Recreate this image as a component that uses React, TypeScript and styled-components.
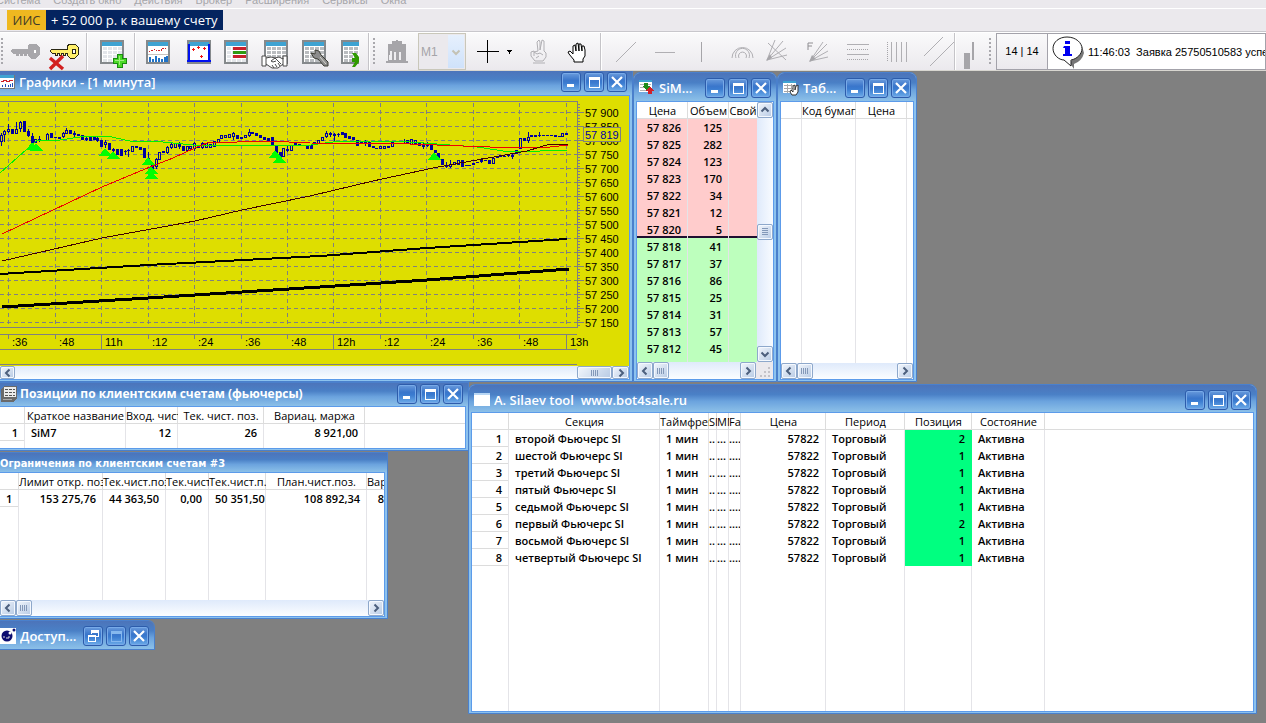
import React from "react";
import styled, { createGlobalStyle, css } from "styled-components";

const uiFont = `"Open Sans", "Noto Sans", sans-serif`;
const plainFont = `"Liberation Sans", Arial, sans-serif`;

const GlobalStyle = createGlobalStyle`
  * { box-sizing: border-box; }
  body { margin: 0; overflow: hidden; font-family: ${uiFont}; font-size: 11px; color: #000; background: #808080; }
  button { font: inherit; padding: 0; border: 0; background: none; }
  svg { display: block; flex: none; overflow: visible; }
`;

const Page = styled.div`
  display: flex;
  flex-direction: column;
  min-height: 100vh;
`;

/* ---------- menu, banner and toolbar ---------- */

const MenuBar = styled.nav`
  display: flex;
  align-items: flex-end;
  gap: 13px;
  height: 9px;
  padding-bottom: 2px;
  overflow: hidden;
  background: #ebe9ed;
  border-bottom: 1px solid #fff;
`;

const MenuItem = styled.button`
  font-size: 11px;
  line-height: 16px;
  height: 14px;
  flex: none;
  white-space: nowrap;
  font-family: ${plainFont};
  color: #a6a6aa;
  &:first-child { margin-left: -4px; }
`;

const BannerBar = styled.div`
  display: flex;
  align-items: flex-start;
  gap: 3px;
  height: 23px;
  padding-top: 1px;
  background: #ebe9ed;
  border-bottom: 1px solid #c8c7cc;
`;

const Banner = styled.a`
  display: flex;
  height: 20px;
  line-height: 20px;
  color: #fff;
  background: #04245f;
  font-size: 13px;
  font-weight: 500;
  text-decoration: none;
  white-space: nowrap;
`;

const BannerTag = styled.span`
  width: 39px;
  text-align: center;
  color: #3f3a28;
  background: #efb820;
`;

const BannerText = styled.span`
  padding: 0 5px;
`;

const Toolbar = styled.div`
  display: flex;
  align-items: stretch;
  height: 39px;
  background: linear-gradient(#fafafb, #ebe9ed);
  border-top: 1px solid #fff;
  border-bottom: 1px solid #d8d6d0;
`;

const Grip = styled.span<{ $w: number }>`
  flex: none;
  width: ${(p) => p.$w}px;
  margin: 4px 0;
  background: radial-gradient(circle, #a9a8ad 1px, transparent 1px) center top / 4px 4px repeat-y;
`;

const Separator = styled.span`
  flex: none;
  width: 2px;
  border-left: 1px solid #c5c4c8;
  border-right: 1px solid #fff;
`;

const Tool = styled.button<{ $w: number }>`
  display: flex;
  flex: none;
  align-items: center;
  justify-content: center;
  width: ${(p) => p.$w}px;
`;

const Period = styled.label`
  position: relative;
  flex: none;
  width: 48px;
  margin-left: 2px;
  border: 1px solid #c9c7ba;
  background: #ebe9ed;
`;

const PeriodSelect = styled.select`
  appearance: none;
  width: 100%;
  height: 100%;
  padding: 0 0 0 2px;
  border: 0;
  background: transparent;
  color: #a5a4a8;
  opacity: 1;
  font: 12px ${plainFont};
`;

const PeriodArrow = styled.span`
  position: absolute;
  top: 1px;
  right: 1px;
  bottom: 1px;
  width: 16px;
  display: flex;
  align-items: center;
  justify-content: center;
  background: linear-gradient(#e6f0fd, #cfe2fb);
  pointer-events: none;
`;

const Counter = styled.div`
  flex: none;
  width: 52px;
  margin-left: 2px;
  border: 1px solid #a3a2aa;
  text-align: center;
  line-height: 34px;
  font-family: ${plainFont};
`;

const Message = styled.output`
  display: flex;
  flex: 1;
  min-width: 0;
  align-items: center;
  gap: 4px;
  padding-left: 4px;
  overflow: hidden;
  border: 1px solid #a3a2aa;
  border-left-width: 0;
  background: #fff;
  white-space: pre;
  font-family: ${plainFont};
`;

/* ---------- desktop windows ---------- */

const Desktop = styled.main`
  position: relative;
  flex: 1;
  overflow: hidden;
  background: #808080;
`;

const Frame = styled.section<{ $x: number; $y: number; $w: number; $h: number; $cut?: boolean; $square?: boolean }>`
  position: absolute;
  left: ${(p) => p.$x}px;
  top: ${(p) => p.$y}px;
  width: ${(p) => p.$w}px;
  height: ${(p) => p.$h}px;
  display: flex;
  flex-direction: column;
  overflow: hidden;
  padding: 0 2px 1px;
  border: 1px solid #4a80cc;
  border-radius: 7px 7px 0 0;
  background: #8cc2ee;
  ${(p) => p.$square && css`border-radius: 0;`}
  ${(p) => p.$cut && css`border-left: 0; padding-left: 0; border-top-left-radius: 0;`}
`;

const TitleBar = styled.header<{ $h: number; $cut?: boolean; $square?: boolean }>`
  display: flex;
  flex: none;
  align-items: center;
  gap: 4px;
  height: ${(p) => p.$h}px;
  margin: 0 -2px 0 ${(p) => (p.$cut ? 0 : -2)}px;
  padding: ${(p) => (p.$square ? "0 5px 2px" : "2px 5px 0")};
  ${(p) => p.$cut && css`padding-left: 0;`}
  background: linear-gradient(#4c74ba 0%, #4a80c6 35%, #6ba3de 60%, #8cc0e8 100%);
`;

const Title = styled.h2<{ $tight?: boolean; $small?: boolean }>`
  flex: 1;
  min-width: 0;
  margin: 0;
  overflow: hidden;
  color: #fff;
  white-space: pre;
  font-family: ${uiFont};
  font-size: ${(p) => (p.$tight ? 12 : 13)}px;
  font-weight: ${(p) => (p.$tight ? 700 : 600)};
  line-height: 18px;
  ${(p) => p.$small && css`
    padding-top: 4px;
    font-family: "DejaVu Sans Condensed", "DejaVu Sans", sans-serif;
    font-size: 11px;
    font-weight: 700;
  `}
`;

const Controls = styled.div`
  display: flex;
  gap: 3px;
`;

const ControlButton = styled.button`
  display: flex;
  align-items: center;
  justify-content: center;
  width: 20px;
  height: 20px;
  border: 1px solid #2d5cab;
  border-radius: 3px;
  box-shadow: inset 0 0 0 1px #78aae8;
  background: linear-gradient(#6a9bdc 0%, #3a76cb 40%, #3a7bd0 55%, #6cabe8 100%);
`;

const Body = styled.div<{ $cut?: boolean }>`
  display: flex;
  flex: 1;
  flex-direction: column;
  min-height: 0;
  border: 1px solid #5c9bea;
  ${(p) => p.$cut && css`border-left: 0;`}
  background: #fff;
  overflow: hidden;
`;

const Split = styled.div`
  display: flex;
  flex: 1;
  min-height: 0;
`;

const TableArea = styled.div`
  flex: 1;
  min-width: 0;
  min-height: 0;
  overflow: hidden;
`;

/* ---------- scroll bars ---------- */

const ScrollTrack = styled.div<{ $vertical?: boolean; $size: number }>`
  display: flex;
  flex: none;
  align-items: stretch;
  ${(p) =>
    p.$vertical
      ? css`flex-direction: column; width: ${p.$size}px; background: linear-gradient(90deg, #dfeafb, #f8fbff);`
      : css`height: ${p.$size}px; background: linear-gradient(#dfeafb, #fbfdff);`}
`;

const ScrollButton = styled.button<{ $w?: number }>`
  display: flex;
  flex: none;
  align-items: center;
  justify-content: center;
  width: ${(p) => p.$w ?? 16}px;
  min-height: 12px;
  border: 1px solid #8ea8cb;
  border-radius: 2px;
  box-shadow: inset 0 0 0 1px #f4f8fe;
  background: linear-gradient(135deg, #f2f6fc, #b7cae4);
`;

const VerticalButton = styled(ScrollButton)`
  height: 16px;
`;

const Space = styled.span`
  flex: 1;
`;

const Corner = styled.span`
  width: 17px;
  padding: 4px 3px;
  background: #ebe9ed;
`;

/* ---------- tables ---------- */

const Grid = styled.table<{ $full?: boolean }>`
  width: 100%;
  height: ${(p) => (p.$full ? "100%" : "auto")};
  table-layout: fixed;
  border-collapse: separate;
  border-spacing: 0;
  font-weight: 600;
  line-height: 16px;
`;

const Head = styled.th`
  height: 17px;
  padding: 1px 0 0;
  overflow: hidden;
  white-space: nowrap;
  font-weight: 400;
  box-shadow: inset -1px -1px #dcdcdc;
  &:last-child { box-shadow: inset 0 -1px #dcdcdc; }
`;

const Cell = styled.td<{ $align?: "left" | "right"; $bg?: string; $line?: boolean; $pad?: number }>`
  height: 17px;
  padding: 0 ${(p) => p.$pad ?? 6}px;
  overflow: hidden;
  white-space: nowrap;
  text-align: ${(p) => p.$align ?? "left"};
  background: ${(p) => p.$bg ?? "transparent"};
  border-right: 1px solid ${(p) => p.$bg ?? "#e4e4e8"};
  ${(p) => p.$line && css`box-shadow: inset 0 -1px #dcdcdc;`}
  &:last-child { border-right: 0; }
`;

const FillCell = styled.td`
  padding: 0;
  border-right: 1px solid #e4e4e8;
  &:last-child { border-right: 0; }
`;

const BookRow = styled.tr<{ $side: "ask" | "bid"; $edge?: boolean }>`
  background: ${(p) => (p.$side === "ask" ? "#ffcccc" : "#bdffbd")};
  ${(p) => p.$edge && css`td { box-shadow: inset 0 -2px #201030; }`}
`;

/* ---------- icons ---------- */

const crisp = { shapeRendering: "crispEdges" as const };

const GridBase = ({ cell = "#e3e6ea", w = 24 }: { cell?: string; w?: number }) => (
  <g>
    <path d={`M${w} 1H1V23H${w}`} fill="#fff" stroke="#85898c" strokeWidth="2" />
    {w === 24 && <path d="M23 0V24" stroke="#85898c" strokeWidth="2" />}
    <rect x="2" y="2" width={w === 24 ? 20 : w - 2} height="4" fill="#3ea3d2" />
    {[7, 11, 15, 19].map((y) =>
      [3, 8, 13, 18].filter((x) => x < w - 1).map((x) => <rect key={`${x}-${y}`} x={x} y={y} width={x + 4 > w ? w - x : 4} height="3" fill={cell} />)
    )}
  </g>
);

const KeyShape = ({ fill, line }: { fill: string; line: string }) => (
  <g>
    <path d="M1 8L3 6H18V3L21 1H26L29 4V12L26 15H21L18 12V10H16V12H14V10H12V12H10V10H8V12H6V10H3Z" fill={fill} stroke={line} />
    <rect x="23" y="6" width="3" height="4" fill="#fff" stroke={line} />
  </g>
);

const icons = {
  keyOff: <svg width="30" height="18" {...crisp}><KeyShape fill="#a8a7ab" line="#a8a7ab" /></svg>,
  keyCut: (
    <svg width="34" height="18" viewBox="0 0 34 18">
      <g {...crisp}><KeyShape fill="#fff06a" line="#2b2814" /></g>
      <path d="M1 15L14 26M14 13L1 26" stroke="#d22020" strokeWidth="3.4" />
    </svg>
  ),
  add: (
    <svg width="22" height="24" {...crisp}>
      <GridBase />
      <path d="M17 14H22V18H26V23H22V27H17V23H13V18H17Z" fill="#4ad826" stroke="#188a10" />
      <path d="M19 16V25M15 20H24" stroke="#9cf07c" />
    </svg>
  ),
  chart: (
    <svg width="24" height="24" {...crisp}>
      <GridBase cell="#fff" />
      <path d="M3 12L5 10 7 11 9 9 11 11 13 10 15 11 17 8 19 9 21 7" fill="none" stroke="#d02028" strokeDasharray="2 1" />
      <path d="M2 14H22" stroke="#c8c4c0" />
      {[[3, 17], [6, 19], [9, 16], [12, 18], [15, 19], [18, 17], [20, 16]].map(([x, y]) => <rect key={x} x={x} y={y} width="2" height={22 - y} fill="#1f72c8" />)}
    </svg>
  ),
  scatter: (
    <svg width="24" height="24" {...crisp}>
      <GridBase cell="#fff" />
      <path d="M2 4V22M22 4V22M0 21H24" stroke="#0010f0" strokeWidth="2" />
      <path d="M5 9H8M6.500 8V11M10 7H13M11.500 6V9M16 8H19M17.500 7V10M13 16H16M14.500 15V18" stroke="#f01010" />
    </svg>
  ),
  rows: (
    <svg width="26" height="24" {...crisp}>
      <GridBase />
      <rect x="9" y="7" width="13" height="3" fill="#c8202c" />
      <rect x="9" y="11" width="13" height="3" fill="#2f9a12" />
      <rect x="9" y="15" width="13" height="3" fill="#c8202c" />
    </svg>
  ),
  deal: (
    <svg width="22" height="24">
      <g {...crisp}><GridBase cell="#b9bcbf" /></g>
      <path d="M-2 16H2V18L7 17 11 18 15 17 19 19V16H23V26H19V24L14 28 8 28 2 24V26H-2Z" fill="#fff" stroke="#4a4a4a" />
      <path d="M2 18V24M19 18V24M7 21L11 18 17 24M7 21L9 22 12 21M8 25L10 28M11 24L13 27M14 23L16 26" fill="none" stroke="#4a4a4a" />
    </svg>
  ),
  tune: (
    <svg width="24" height="24">
      <g {...crisp}><GridBase cell="#b9bcbf" /></g>
      <path d="M9 13L13 14 13 10 17 11 19 15 26 22V26L22 26 16 19 12 18Z" fill="#8c8c8c" stroke="#3c3c34" />
      <path d="M18 17L24 24" stroke="#d8d8d0" />
    </svg>
  ),
  exportTo: (
    <svg width="20" height="24">
      <g {...crisp}><GridBase cell="#b9bcbf" w={18} /></g>
      <path d="M11 13H15L18 17V22L14 27H11L14 22H11V18H14Z" fill="#2f9a00" />
    </svg>
  ),
  tower: <svg width="22" height="24" {...crisp}><path d="M2 4H6V1H10V0H12V1H16V4H20V21H22V23H0V21H2Z" fill="#a6a5a9" /><path d="M4 11H6V20H3ZM8 12H10V20H8ZM13 12H15V20H13Z" fill="#efeef1" /></svg>,
  cross: <svg width="36" height="23" {...crisp}><path d="M0 11.500H22M10.500 0V23" stroke="#000" /><path d="M30 10H35L32.500 14Z" fill="#000" /></svg>,
  twoFingers: (
    <svg width="18" height="26">
      <path d="M4 13L8 12 7 3 9 1 10 3V11L12 1 14 2 14 12 16 14V18L13 22H5L1 17V13L4 12V17M4 13L7 15 10 14 13 16M9 17L6 19M3 24H15" fill="none" stroke="#b0afb3" />
    </svg>
  ),
  palm: (
    <svg width="20" height="20">
      <path d="M7 18L2 12 1 10 3 9 6 12V4L8 3 9 9V2L11 1 12 9V2L14 2 15 9V4L17 4 18 8V14L16 17V20H7Z" fill="#fff" stroke="#000" />
    </svg>
  ),
  lineUp: <svg width="20" height="20"><path d="M0 20L20 0" stroke="#b0afb3" /></svg>,
  lineFlat: <svg width="20" height="20" {...crisp}><path d="M0 10H20" stroke="#b0afb3" /></svg>,
  lineTall: <svg width="2" height="20" {...crisp}><path d="M.5 0V20" stroke="#a6a5a9" /></svg>,
  arcs: <svg width="24" height="10"><path d="M1 11A10 10 0 1 1 22 11M5 11A7 7 0 1 1 18 11M8 11A4 4 0 1 1 15 11" fill="none" stroke="#b0afb3" /></svg>,
  gann: <svg width="22" height="24"><path d="M1 20L17 1M1 20L20 8M1 20L21 15M2 3L20 20M1 20L9 0" fill="none" stroke="#b0afb3" /><path d="M0 21L4 14 6 18Z" fill="#a6a5a9" /></svg>,
  fibo: <svg width="22" height="22"><path d="M2 20L15 1M2 20L19 3M2 20L20 10M2 20L20 16" fill="none" stroke="#b0afb3" /><path d="M0 9V2H5M0 5H4" fill="none" stroke="#8f8e92" /><path d="M1 21L4 14 8 18Z" fill="#a6a5a9" /></svg>,
  levels: <svg width="22" height="20" {...crisp}><path d="M0 2.500H22M0 12.500H22" stroke="#b0afb3" /><path d="M0 7.500H22M0 17.500H22" stroke="#a6a5a9" strokeDasharray="1 1" /></svg>,
  zones: <svg width="20" height="20" {...crisp}><path d="M.5 0V20" stroke="#a6a5a9" strokeDasharray="1 1" /><path d="M4.500 0V20M9.500 0V20M14.500 0V20M19.500 0V20" stroke="#b0afb3" /></svg>,
  channel: <svg width="30" height="30"><path d="M0 19L19 0M6 29L30 5" stroke="#b0afb3" /></svg>,
  bars: <svg width="14" height="20" {...crisp}><rect y="11" width="6" height="16" fill="#a6a5a9" /><rect x="8" width="2" height="18" fill="#a6a5a9" /></svg>,
  info: (
    <svg width="32" height="32" viewBox="0 0 32 32">
      <path d="M18 27L22 33V28Q30 25 32 17L30 10Z" fill="#777" />
      <path d="M15 1C7 1 1 6 1 12.500S7 24 12 24L19 30V24C25 23 30 18 30 12.500S24 1 15 1Z" fill="#fff" stroke="#222" />
      <path d="M13 5H18V8H13ZM12 10H18V18H20V20H11V18H13V12H11Z" fill="#0000f0" />
    </svg>
  ),
};

const Minimize = () => <svg width="14" height="14" {...crisp}><rect x="3" y="9" width="7" height="3" fill="#fff" /></svg>;
const Maximize = ({ color = "#fff" }: { color?: string }) => (
  <svg width="14" height="14" {...crisp}><path d="M2 2H13V13H2V2M3 5V12H12V5Z" fill={color} fillRule="evenodd" /></svg>
);
const Restore = () => (
  <svg width="14" height="14" {...crisp}><path d="M5 1H13V8H10V7H12V4H6V5H5ZM2 6H10V13H2ZM3 8V12H9V8Z" fill="#fff" fillRule="evenodd" /></svg>
);
const Close = () => <svg width="14" height="14"><path d="M2 2L12 12M12 2L2 12" stroke="#fff" strokeWidth="2.200" /></svg>;

const Chevron = ({ turn = 0, color = "#4c5f7d" }: { turn?: number; color?: string }) => (
  <svg width="10" height="10" viewBox="0 0 10 10"><path d="M6.500 1.500L3 5L6.500 8.500" fill="none" stroke={color} strokeWidth="2" transform={`rotate(${turn} 5 5)`} /></svg>
);
const Lines = ({ turn = 0 }: { turn?: number }) => (
  <svg width="8" height="8" viewBox="0 0 8 8" {...crisp}><path d="M.5 1V7M2.500 1V7M4.500 1V7M6.500 1V7" stroke="#8398b8" transform={`rotate(${turn} 4 4)`} /></svg>
);

const ChartMark = () => (
  <svg width="15" height="14" {...crisp}>
    <rect width="15" height="14" fill="#fff" /><rect width="15" height="3" fill="#3ea3d2" />
    <path d="M1 6.500H3V5.500H6V6.500H9V5.500H13" stroke="#d02028" fill="none" />
    <path d="M2.500 12V10M5.500 12V9M8.500 12V10M10.500 12V9M12.500 12V8" stroke="#1f50b8" />
    <path d="M0 13.500H15M14.500 0V14" stroke="#777" />
  </svg>
);
const BookMark = () => (
  <svg width="16" height="16" {...crisp}>
    <rect width="13" height="12" fill="#fff" /><rect width="13" height="2" fill="#3ea3d2" />
    <path d="M1 4.500H12M1 7.500H12M1 10.500H12" stroke="#b4b4b4" /><path d="M5 3H9V6H11L7 10L3 6H5Z" fill="#1d8c1a" /><path d="M9 14H13V11H15L11 6L7 11H9Z" fill="#d02028" />
  </svg>
);
const TableMark = () => (
  <svg width="16" height="15">
    <rect width="13" height="12" fill="#fff" /><rect width="13" height="2" fill="#3ea3d2" /><path d="M1 4.500H12M1 7.500H12M1 10.500H9M4.500 3V12M8.500 3V12" stroke="#a8a8a8" />
    <path d="M8 9L10 11V5L12 4V9L13 5 15 4V11L13 14H9L7 11Z" fill="#fff" stroke="#333" />
  </svg>
);
const SheetMark = () => (
  <svg width="16" height="16" {...crisp}>
    <path d="M4 0H17V12L13 16H1V3Z" fill="#6a6a6a" /><path d="M4 1H16V11H4Z" fill="#ececec" />
    <path d="M5 3.500H15M5 6.500H15M5 9.500H15" stroke="#555" strokeDasharray="3 1" /><path d="M3 13.500H12" stroke="#aaa" />
  </svg>
);
const FormMark = () => <svg width="16" height="13" {...crisp}><rect width="16" height="13" fill="#fff" /><rect width="16" height="2" fill="#b7d6f4" /></svg>;
const MoonMark = () => <svg width="16" height="16"><rect width="16" height="16" fill="#fff" /><circle cx="7" cy="8" r="5.500" fill="#0c0c70" /><path d="M4 10V8M6 10H9V8" stroke="#ddd" fill="none" /><circle cx="10" cy="5" r="1.500" fill="#fff" /><circle cx="14" cy="2" r="1.500" fill="#0c0c70" /></svg>;

/* ---------- shared parts ---------- */

type WindowProps = {
  x: number; y: number; w: number; h: number; bar: number; title: string; icon?: React.ReactNode;
  cut?: boolean; square?: boolean; small?: boolean; tight?: boolean; controls?: boolean; minimized?: boolean; children?: React.ReactNode;
};

const Window = ({ x, y, w, h, bar, title, icon, cut, square, small, tight, controls = true, minimized, children }: WindowProps) => (
  <Frame $x={x} $y={y} $w={w} $h={h} $cut={cut} $square={square} aria-label={title}>
    <TitleBar $h={bar} $cut={cut} $square={square}>
      {icon}
      <Title $small={small} $tight={tight}>{title}</Title>
      {controls && (
        <Controls>
          <ControlButton aria-label={minimized ? "Восстановить" : "Свернуть"}>{minimized ? <Restore /> : <Minimize />}</ControlButton>
          <ControlButton aria-label="Развернуть"><Maximize color={minimized ? "#86b8ee" : "#fff"} /></ControlButton>
          <ControlButton aria-label="Закрыть"><Close /></ControlButton>
        </Controls>
      )}
    </TitleBar>
    {!minimized && <Body $cut={cut}>{children}</Body>}
  </Frame>
);

const Columns = ({ widths }: { widths: number[] }) => (
  <colgroup>{widths.map((w, i) => <col key={i} style={{ width: w }} />)}<col /></colgroup>
);

const Filler = ({ n }: { n: number }) => <tr>{Array.from({ length: n }, (_, i) => <FillCell key={i} />)}</tr>;

const HorizontalScroll = () => (
  <ScrollTrack $size={16}>
    <ScrollButton aria-label="Влево"><Chevron /></ScrollButton>
    <ScrollButton aria-label="Ползунок"><Lines /></ScrollButton>
    <Space />
    <ScrollButton aria-label="Вправо"><Chevron turn={180} /></ScrollButton>
  </ScrollTrack>
);

/* ---------- price chart ---------- */

/* Candles: wick top, wick bottom, body top, body bottom in thirds of a pixel; fifth value 1 is a rising (hollow) candle. */
const candles: number[][] = [
  [130,167,135,157,1],[120,155,123,135,1],[103,130,117,125,1],[117,132,117,132],[95,132,117,131,1],[93,125,97,117,1],[93,127,93,127],
  [117,142,123,138],[130,165,138,162],[148,160,148,160,1],[137,155,148,152],[149,152,149,152],[130,153,131,152,1],[129,143,129,143],
  [141,144,141,144],[140,147,140,147,1],[125,143,130,142,1],[113,133,120,132,1],[120,132,120,132],[123,140,129,135],[133,138,133,138],
  [135,150,135,150],[140,152,143,150],[141,152,141,152],[142,150,142,150],[138,155,144,154],[150,170,150,170],[150,175,157,165,1],
  [158,180,158,180],[173,190,176,183],[178,195,178,195],[178,198,178,198],[180,195,182,185],[178,200,180,184],[168,186,168,186,1],
  [167,175,167,175],[172,180,172,180],[175,203,175,203],[185,220,203,215],[218,236,218,236],[203,238,207,232,1],[187,209,187,209,1],
  [183,190,183,190],[168,193,172,190,1],[160,178,163,175,1],[160,175,160,175,1],[155,178,162,172],[168,183,168,183],[167,182,167,182,1],
  [167,178,167,178,1],[155,183,160,176,1],[165,175,165,175,1],[155,178,158,174,1],[160,174,160,174,1],[162,174,162,174,1],
  [154,170,154,170,1],[147,158,147,158,1],[135,148,135,148,1],[135,145,135,145,1],[131,145,131,145,1],[125,150,128,140,1],
  [135,147,135,147],[140,147,140,147,1],[134,145,134,145,1],[117,140,125,138,1],[125,133,125,133],[128,137,128,137],[135,145,135,145],
  [140,150,140,150],[143,152,143,152],[141,165,141,165],[168,190,168,190],[185,200,185,200],[175,200,175,200,1],[165,185,177,183],
  [165,182,165,182,1],[160,165,160,165],[162,168,162,168],[164,168,164,168],[166,178,166,178],[165,178,165,178],[155,165,155,165,1],
  [150,162,150,162,1],[140,153,140,153,1],[122,143,128,140,1],[125,140,130,134],[130,155,133,137],[128,140,132,136],[127,135,127,135],
  [129,145,129,145],[137,147,137,147],[140,150,140,150],[150,167,150,167],[157,163,157,163],[150,167,155,163,1],[157,170,157,170],
  [168,175,168,175],[174,178,174,178],[168,176,168,176,1],[168,176,168,176,1],[168,175,168,175,1],[155,170,155,170,1],
  [153,157,153,157],[154,157,154,157],[148,160,153,157],[150,162,150,162],[148,166,148,166,1],[150,163,150,163,1],[158,167,158,167],
  [158,178,165,172,1],[155,170,165,168],[165,180,165,180],[180,190,180,190],[190,207,190,207],[207,224,207,224],[215,235,225,232,1],
  [210,235,223,231,1],[215,225,215,225,1],[210,225,210,225,1],[210,230,210,230],[226,229,226,229],[226,229,226,229],[218,225,218,225,1],
  [217,220,217,220],[203,220,210,215],[211,214,211,214],[210,222,210,222],[205,222,205,222,1],[202,205,202,205],[198,201,198,201],
  [198,201,198,201],[192,202,195,198],[190,207,195,200],[180,192,180,192],[145,178,145,178,1],[145,152,145,152],[127,160,140,152,1],
  [135,141,135,141],[135,140,135,140],[127,140,135,139],[135,139,135,139],[135,139,135,139],[134,137,134,137],[136,140,136,140],
  [138,142,138,142],[130,142,130,142,1],[130,134,130,134],
];
const chartY = (v: number) => Math.round(v / 3) - 6;

const timeMarks: [number, string][] = [
  [8, ":36"], [55, ":48"], [101, "11h"], [148, ":12"], [194, ":24"], [241, ":36"], [287, ":48"],
  [333, "12h"], [380, ":12"], [426, ":24"], [473, ":36"], [519, ":48"], [566, "13h"],
];
const priceMarks = Array.from({ length: 16 }, (_, i) => ({ y: 16 + i * 14, label: `57 ${900 - i * 50}` }));
const signals = [[32, 47], [36, 48], [105, 53], [113, 56], [148, 62], [151, 71], [151, 76], [275, 55], [279, 60], [434, 57]];

const PriceChart = () => (
  <svg width="629" height="270" viewBox="0 0 629 270" fontFamily="Liberation Sans, Arial, sans-serif" fontSize="11" role="img" aria-label="Минутный график">
    <rect width="629" height="270" fill="#dede00" />
    <g {...crisp} fill="none" stroke="#808080">
      <path d={priceMarks.map((p) => `M0 ${p.y}.5H577`).join("")} strokeDasharray="4 3" />
      <path d={timeMarks.map(([x]) => `M${x}.5 7V231`).join("")} strokeDasharray="4 3" />
      <path d="M0 5.500H577.500V231.500H0M0 238.500H577M0 253.500H577M0 268.500H577" />
      <path d={Array.from({ length: 80 }, (_, i) => `M577 ${Math.round(8 + i * 2.8)}.5h3`).join("")} />
      <path d={priceMarks.map((p) => `M577 ${p.y}.5h7`).join("")} />
      <path d={timeMarks.map(([x, t]) => `M${x}.5 238v${t.endsWith("h") ? 15 : 5}`).join("")} />
    </g>
    <g {...crisp} stroke="#0000a0">
      {candles.map(([t, b, o, c, up], i) => {
        const x = Math.round(0.5 + i * 3.875);
        const top = chartY(o);
        const height = Math.max(1, chartY(c) - top);
        return (
          <g key={i}>
            <path d={`M${x}.5 ${chartY(t)}V${chartY(b)}`} />
            {up && height > 1 ? <rect x={x - 0.5} y={top + 0.5} width="2" height={height - 1} fill="#dede00" /> : <rect x={x - 1} y={top} width="3" height={height} fill="#0000a0" stroke="none" />}
          </g>
        );
      })}
    </g>
    <g {...crisp} fill="none">
      <path d="M0 77L36 45 60 44 80 41 107 40 130 45 163 46 193 49 311 49 340 45 370 45 410 46 437 48 477 51 510 56 540 55 567 54" stroke="#00f000" />
      <path d="M2 138L102 91 150 71 173 62 195 52 207 47 267 45 310 47 410 48 463 50 490 51 550 51 568 49" stroke="#f00000" />
      <path d="M2 165L102 142 195 125 242 114 310 100 373 85 433 72 477 64 527 55 550 48 568 48" stroke="#400000" />
      <path d="M0 178L148 169 320 160 427 152 567 143" stroke="#000" strokeWidth="2" />
      <path d="M2 211L148 202 320 191 427 184 569 173" stroke="#000" strokeWidth="3" />
    </g>
    <g {...crisp} fill="#00ff00">
      {signals.map(([x, y], i) => <path key={i} d={`M${x} ${y - 1}l7 8h-13z`} />)}
    </g>
    {priceMarks.map((p) => <text key={p.y} x="585" y={p.y + 5}>{p.label}</text>)}
    {timeMarks.map(([x, t]) => <text key={x} x={x + 4} y="250">{t}</text>)}
    <rect x="583.500" y="31.500" width="37" height="14" fill="#dede00" stroke="#808080" />
    <text x="585" y="43" fill="#0000a0">57 819</text>
  </svg>
);

/* ---------- data ---------- */

const asks = [[826, 125], [825, 282], [824, 123], [823, 170], [822, 34], [821, 12], [820, 5]];
const bids = [[818, 41], [817, 37], [816, 86], [815, 25], [814, 31], [813, 57], [812, 45], [811, 38]];
const sections: [string, number][] = [
  ["второй", 2], ["шестой", 1], ["третий", 1], ["пятый", 1], ["седьмой", 1], ["первый", 2], ["восьмой", 1], ["четвертый", 1],
];
const menu = ["Система", "Создать окно", "Действия", "Брокер", "Расширения", "Сервисы", "Окна"];

type ToolDef = [keyof typeof icons, number, string];
const Tools = ({ items }: { items: ToolDef[] }) => (
  <>{items.map(([name, w, label]) => <Tool key={name} $w={w} aria-label={label}>{icons[name]}</Tool>)}</>
);

export default function App() {
  return (
    <Page>
      <GlobalStyle />
      <MenuBar>{menu.map((m) => <MenuItem key={m}>{m}</MenuItem>)}</MenuBar>
      <BannerBar>
        <Grip $w={4} />
        <Banner href="#iis"><BannerTag>ИИС</BannerTag><BannerText>+ 52 000 р. к вашему счету</BannerText></Banner>
      </BannerBar>
      <Toolbar>
        <Grip $w={4} />
        <Tools items={[["keyOff", 42, "Подключить"], ["keyCut", 40, "Отключить"]]} />
        <Separator />
        <Tools items={[["add", 46, "Новая таблица"]]} />
        <Separator />
        <Tools items={[["chart", 44, "График"], ["scatter", 38, "Точки"], ["rows", 38, "Котировки"], ["deal", 38, "Сделки"], ["tune", 40, "Настройка"], ["exportTo", 34, "Экспорт"]]} />
        <Separator />
        <Grip $w={8} />
        <Tools items={[["tower", 38, "Индикаторы"]]} />
        <Period>
          <PeriodSelect disabled aria-label="Период"><option>M1</option></PeriodSelect>
          <PeriodArrow><Chevron turn={-90} color="#c4c2b4" /></PeriodArrow>
        </Period>
        <Tools items={[["cross", 58, "Перекрестие"], ["twoFingers", 30, "Выбор"], ["palm", 46, "Сдвиг"]]} />
        <Separator />
        <Tools items={[["lineUp", 48, "Линия"], ["lineFlat", 30, "Горизонталь"], ["lineTall", 44, "Вертикаль"], ["arcs", 38, "Дуги"], ["gann", 30, "Веер Ганна"], ["fibo", 54, "Веер Фибоначчи"], ["levels", 24, "Уровни"], ["zones", 54, "Зоны"], ["channel", 30, "Канал"]]} />
        <Separator />
        <Tools items={[["bars", 30, "Объемы"]]} />
        <Grip $w={8} />
        <Counter>14 | 14</Counter>
        <Message>{icons.info}<span>11:46:03  Заявка 25750510583 успешно</span></Message>
      </Toolbar>

      <Desktop>
        <Window x={0} y={-1} w={633} h={312} bar={24} title="Графики - [1 минута]" icon={<ChartMark />} cut square>
          <PriceChart />
          <ScrollTrack $size={13}>
            <ScrollButton $w={15} aria-label="Влево"><Chevron /></ScrollButton>
            <Space />
            <ScrollButton $w={35} aria-label="Ползунок"><Lines /></ScrollButton>
            <ScrollButton $w={17} aria-label="Вправо"><Chevron turn={180} /></ScrollButton>
          </ScrollTrack>
        </Window>

        <Window x={633} y={1} w={144} h={310} bar={28} title="SiM…" icon={<BookMark />}>
          <Split>
            <TableArea>
              <Grid>
                <Columns widths={[51, 41]} />
                <thead><tr><Head>Цена</Head><Head>Объем</Head><Head>Свой</Head></tr></thead>
                <tbody>
                  {asks.map(([p, v], i) => <BookRow key={p} $side="ask" $edge={i === asks.length - 1}><Cell $align="right">57 {p}</Cell><Cell $align="right">{v}</Cell><Cell /></BookRow>)}
                  {bids.map(([p, v]) => <BookRow key={p} $side="bid"><Cell $align="right">57 {p}</Cell><Cell $align="right">{v}</Cell><Cell /></BookRow>)}
                </tbody>
              </Grid>
            </TableArea>
            <ScrollTrack $vertical $size={16}>
              <VerticalButton aria-label="Вверх"><Chevron turn={90} /></VerticalButton>
              <Space />
              <VerticalButton aria-label="Ползунок"><Lines turn={90} /></VerticalButton>
              <Space />
              <VerticalButton aria-label="Вниз"><Chevron turn={-90} /></VerticalButton>
            </ScrollTrack>
          </Split>
          <ScrollTrack $size={17}>
            <ScrollButton aria-label="Влево"><Chevron /></ScrollButton>
            <ScrollButton aria-label="Ползунок"><Lines /></ScrollButton>
            <Space />
            <ScrollButton aria-label="Вправо"><Chevron turn={180} /></ScrollButton>
            <Corner><svg width="12" height="12" {...crisp}><path d="M9 1h2v2h-2zM5 5h2v2h-2zM9 5h2v2h-2zM1 9h2v2h-2zM5 9h2v2h-2zM9 9h2v2h-2z" fill="#c4c2c8" /></svg></Corner>
          </ScrollTrack>
        </Window>

        <Window x={777} y={1} w={140} h={310} bar={28} title="Таб…" icon={<TableMark />}>
          <TableArea>
            <Grid $full>
              <Columns widths={[21, 54, 51]} />
              <thead><tr><Head /><Head>Код бумаги</Head><Head>Цена</Head><Head /></tr></thead>
              <tbody><Filler n={4} /></tbody>
            </Grid>
          </TableArea>
          <HorizontalScroll />
        </Window>

        <Window x={0} y={311} w={469} h={69} bar={23} title="Позиции по клиентским счетам (фьючерсы)" icon={<SheetMark />} cut square tight>
          <TableArea>
            <Grid $full>
              <Columns widths={[25, 101, 52, 86, 101]} />
              <thead><tr><Head /><Head>Краткое название</Head><Head>Вход. чист.</Head><Head>Тек. чист. поз.</Head><Head>Вариац. маржа</Head><Head /></tr></thead>
              <tbody>
                <tr><Cell $align="right" $line>1</Cell><Cell>SiM7</Cell><Cell $align="right">12</Cell><Cell $align="right">26</Cell><Cell $align="right">8 921,00</Cell><Cell /></tr>
                <Filler n={6} />
              </tbody>
            </Grid>
          </TableArea>
        </Window>

        <Window x={0} y={381} w={388} h={167} bar={19} title="Ограничения по клиентским счетам #3" cut square small controls={false}>
          <TableArea>
            <Grid $full>
              <Columns widths={[19, 84, 63, 43, 57, 101]} />
              <thead><tr><Head /><Head>Лимит откр. поз.</Head><Head>Тек.чист.поз.</Head><Head>Тек.чист.</Head><Head>Тек.чист.п.</Head><Head>План.чист.поз.</Head><Head>Вар.</Head></tr></thead>
              <tbody>
                <tr><Cell $align="right" $line>1</Cell><Cell $align="right">153 275,76</Cell><Cell $align="right">44 363,50</Cell><Cell $align="right">0,00</Cell><Cell $align="right">50 351,50</Cell><Cell $align="right">108 892,34</Cell><Cell $align="right" $pad={0}>8</Cell></tr>
                <Filler n={7} />
              </tbody>
            </Grid>
          </TableArea>
          <HorizontalScroll />
        </Window>

        <Window x={0} y={549} w={155} h={30} bar={28} title="Доступ…" icon={<MoonMark />} cut minimized />

        <Window x={468} y={313} w={789} h={330} bar={27} title="A. Silaev tool  www.bot4sale.ru" icon={<FormMark />}>
          <TableArea>
            <Grid $full>
              <Columns widths={[37, 151, 49, 8, 12, 12, 85, 79, 67, 73]} />
              <thead>
                <tr>{["", "Секция", "Таймфрейм", "SI", "MM", "Fast", "Цена", "Период", "Позиция", "Состояние", ""].map((h, i) => <Head key={i}>{h}</Head>)}</tr>
              </thead>
              <tbody>
                {sections.map(([name, position], i) => (
                  <tr key={name}>
                    <Cell $align="right" $line>{i + 1}</Cell>
                    <Cell>{name} Фьючерс SI</Cell>
                    <Cell>1 мин</Cell>
                    <Cell $pad={0}>..</Cell>
                    <Cell $pad={0}>...</Cell>
                    <Cell $pad={0}>....</Cell>
                    <Cell $align="right">57822</Cell>
                    <Cell>Торговый</Cell>
                    <Cell $align="right" $bg="#00ff80">{position}</Cell>
                    <Cell>Активна</Cell>
                    <Cell />
                  </tr>
                ))}
                <Filler n={11} />
              </tbody>
            </Grid>
          </TableArea>
        </Window>
      </Desktop>
    </Page>
  );
}
